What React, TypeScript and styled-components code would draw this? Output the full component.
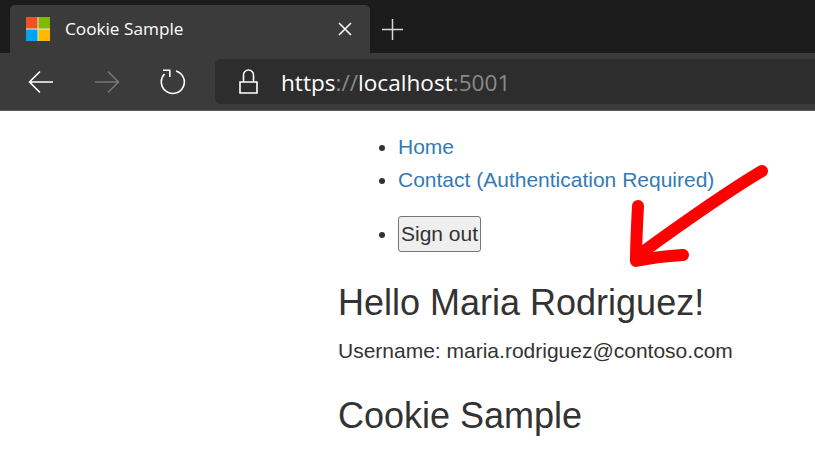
import React from "react";
import styled, { createGlobalStyle } from "styled-components";

const Global = createGlobalStyle`
  html, body { margin: 0; padding: 0; background: #fff; }
  body { width: 815px; height: 474px; overflow: hidden; font-family: "Liberation Sans", Arial, sans-serif; }
`;
const Frame = styled.div`position: relative; width: 815px; height: 474px; overflow: hidden;`;
const TabStrip = styled.div`display: flex; align-items: flex-end; height: 53px; padding-left: 10px; background: #1b1b1b;`;
const Tab = styled.div`
  display: flex; align-items: center; width: 360px; height: 48px; padding: 0 18px 0 16px; box-sizing: border-box;
  background: #3b3b3b; border-radius: 5px 5px 0 0; color: #fff;
  font: 17.2px "Open Sans", "Noto Sans", sans-serif;
`;
const TabTitle = styled.span`flex: 1; margin-left: 15px; padding-bottom: 1px;`;
const IconSlot = styled.span`display: flex; flex: none;`;
const NewTab = styled.span`display: flex; margin-left: 12px; margin-bottom: 13px;`;
const Toolbar = styled.div`
  display: flex; align-items: center; height: 58px; padding-left: 28px; box-sizing: border-box;
  background: #3b3b3b; border-bottom: 1px solid #5d5d5d;
`;
const NavIcon = styled.span`display: flex; width: 26px; margin-right: 40px;`;
const AddressBar = styled.div`
  display: flex; align-items: center; flex: 1; height: 45px; margin-left: -11px; padding-left: 24px;
  background: #2d2d2d; border-radius: 5px 0 0 5px;
  font: 22.6px "Open Sans", "Noto Sans", sans-serif; color: #fff;
`;
const Url = styled.span`margin-left: 23px; padding-top: 1px;`;
const Dim = styled.span`color: #8a8a8a;`;
const Page = styled.main`padding: 21px 0 0 338px; color: #333; font-size: 21px; line-height: 30px;`;
const NavList = styled.ul`margin: 0; padding: 0 0 0 60px;`;
const Item = styled.li`height: 33px; line-height: 30px;`;
const ButtonItem = styled.li`margin-top: 16px; height: 46px;`;
const NavLink = styled.a`color: #337ab7; text-decoration: none;`;
const SignOut = styled.button`
  height: 36px; padding: 0 2px; box-sizing: border-box; font: 21px "Liberation Sans", Arial, sans-serif; color: #333;
  background: #efefef; border: 1px solid #767676; border-radius: 3px; margin-top: 2px;
`;
const Heading = styled.h1`margin: 0; font-weight: 400; font-size: 36px; line-height: 40px; color: #333;`;
const Hello = styled(Heading)`margin-top: 23px;`;
const Sample = styled(Heading)`margin-top: 30px;`;
const Para = styled.p`margin: 13px 0 0;`;
const Arrow = styled.svg`position: absolute; left: 620px; top: 155px;`;

const MsLogo = () => (
  <svg width="24" height="24" viewBox="0 0 24 24">
    <rect width="24" height="24" fill="#e6e6d8" />
    <rect width="11.5" height="11.5" fill="#f25022" />
    <rect x="12.5" width="11.5" height="11.5" fill="#7fba00" />
    <rect y="12.5" width="11.5" height="11.5" fill="#00a4ef" />
    <rect x="12.5" y="12.5" width="11.5" height="11.5" fill="#ffb900" />
  </svg>
);

export default function App() {
  return (
    <Frame>
      <Global />
      <TabStrip>
        <Tab>
          <MsLogo />
          <TabTitle>Cookie Sample</TabTitle>
          <IconSlot>
            <svg width="14" height="14" viewBox="0 0 14 14"><path d="M1 1l12 12M13 1L1 13" stroke="#fff" strokeWidth="1.5" fill="none" /></svg>
          </IconSlot>
        </Tab>
        <NewTab>
          <svg width="21" height="21" viewBox="0 0 21 21"><path d="M10.5 0v21M0 10.5h21" stroke="#d8d8d8" strokeWidth="1.5" fill="none" /></svg>
        </NewTab>
      </TabStrip>
      <Toolbar>
        <NavIcon>
          <svg width="26" height="24" viewBox="0 0 26 24"><path d="M25 12H2M12 1.5L1.5 12 12 22.5" stroke="#fff" strokeWidth="1.6" fill="none" /></svg>
        </NavIcon>
        <NavIcon>
          <svg width="26" height="24" viewBox="0 0 26 24"><path d="M1 12h23M14 1.5L24.5 12 14 22.5" stroke="#777" strokeWidth="1.6" fill="none" /></svg>
        </NavIcon>
        <NavIcon>
          <svg width="26" height="26" viewBox="0 0 26 26"><path d="M16 1.9A11.5 11.5 0 1 1 4.5 5" stroke="#fff" strokeWidth="1.6" fill="none" /><path d="M3 1.2h6.8v6.8" stroke="#fff" strokeWidth="1.6" fill="none" /></svg>
        </NavIcon>
        <AddressBar>
          <svg width="19" height="25" viewBox="0 0 19 25"><path d="M1 13h17v11H1zM4.5 13V6a5 5 0 0 1 10 0v7" stroke="#fff" strokeWidth="1.6" fill="none" /></svg>
          <Url>https<Dim>://</Dim>localhost<Dim>:5001</Dim></Url>
        </AddressBar>
      </Toolbar>
      <Page>
        <NavList>
          <Item><NavLink href="#">Home</NavLink></Item>
          <Item><NavLink href="#">Contact (Authentication Required)</NavLink></Item>
          <ButtonItem><SignOut>Sign out</SignOut></ButtonItem>
        </NavList>
        <Hello>Hello Maria Rodriguez!</Hello>
        <Para>Username: maria.rodriguez@contoso.com</Para>
        <Sample>Cookie Sample</Sample>
      </Page>
      <Arrow width="160" height="120" viewBox="620 155 160 120">
        <path d="M762 171C725 193 680 225 640 254M638 206C637 225 636 245 636 261C650 258 668 256 683 255" stroke="#ff0000" strokeWidth="12" strokeLinecap="round" strokeLinejoin="round" fill="none" />
      </Arrow>
    </Frame>
  );
}
